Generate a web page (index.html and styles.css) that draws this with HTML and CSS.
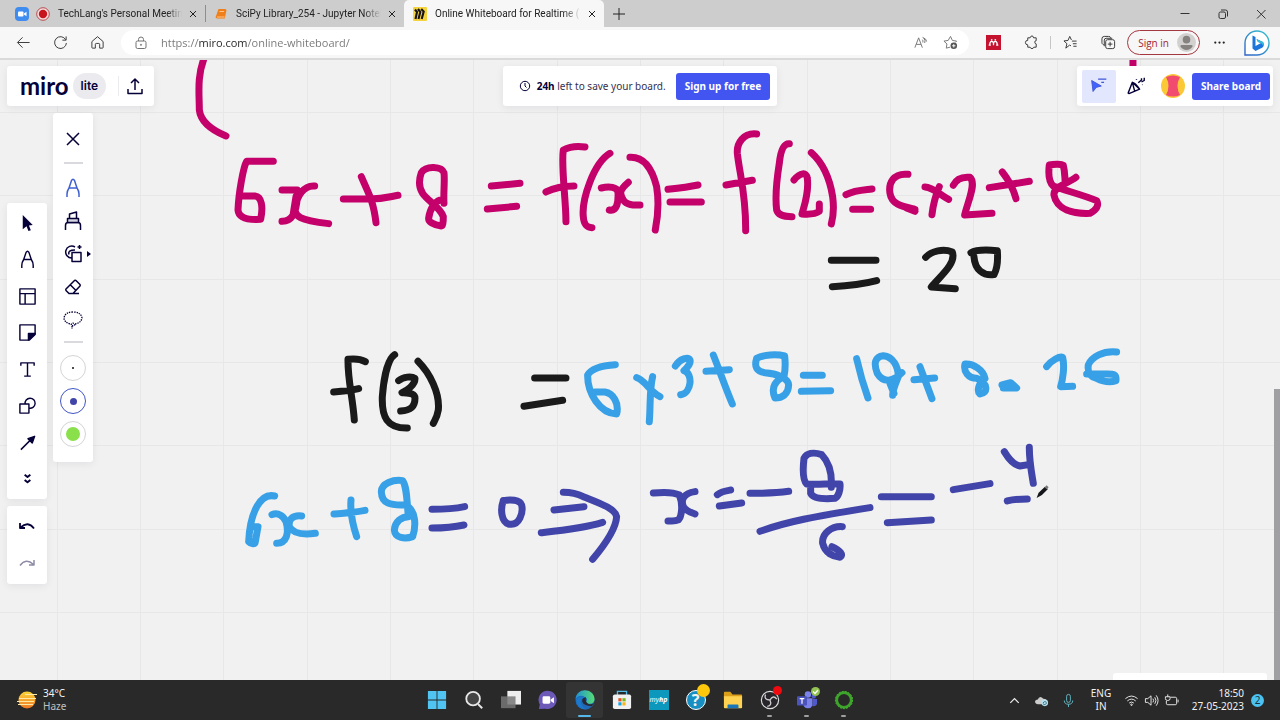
FILE: index.html
```html
<!DOCTYPE html>
<html lang="en">
<head>
<meta charset="utf-8">
<title>Online Whiteboard for Realtime Collaboration</title>
<link rel="stylesheet" href="styles.css">
</head>
<body>
<header class="tabstrip">
  <div class="tab">
    <svg class="i14" viewBox="0 0 14 14"><rect width="14" height="14" rx="4" fill="#3f8cf0"/><rect x="3" y="4.500" width="5.500" height="5" rx="1" fill="#fff"/><path d="M9 6.500L11.500 4.700V9.300L9 7.500Z" fill="#fff"/></svg>
    <svg class="i14 rec" viewBox="0 0 14 14"><circle cx="7" cy="7" r="6.300" fill="#f3dcdc" stroke="#b22630" stroke-width=".8"/><circle cx="7" cy="7" r="4.200" fill="#c8141e"/></svg>
    <span class="tab-title">TechLang's Personal Meetin</span>
    <button class="tab-close" aria-label="Close tab"><svg viewBox="0 0 8 8"><path d="M1 1L7 7M7 1L1 7"/></svg></button>
  </div>
  <div class="tab tab-second">
    <svg class="i14" viewBox="0 0 14 14"><path d="M4.500 2H11.500L12.500 3L10.800 11.500H3L1.500 10.500Z" fill="#ef7f1a"/><path d="M5.500 4.500H10M3 10H10.500" stroke="#ffc58b" fill="none"/></svg>
    <span class="tab-title">SciPy Library_254 - Jupyter Notel</span>
    <button class="tab-close" aria-label="Close tab"><svg viewBox="0 0 8 8"><path d="M1 1L7 7M7 1L1 7"/></svg></button>
  </div>
  <div class="tab tab-active">
    <svg class="i14" viewBox="0 0 14 14"><rect width="14" height="14" rx="1" fill="#f5d33d"/><path d="M2 2.500L4 5L2.500 12M5 2L7.300 5L5.500 12M8.200 2L10.700 4.500L8.700 12" fill="none" stroke="#15131a" stroke-width="2.100"/></svg>
    <span class="tab-title">Online Whiteboard for Realtime (</span>
    <button class="tab-close" aria-label="Close tab"><svg viewBox="0 0 8 8"><path d="M1 1L7 7M7 1L1 7"/></svg></button>
  </div>
  <button class="new-tab" aria-label="New tab"><svg viewBox="0 0 12 12"><path d="M6 0V12M0 6H12"/></svg></button>
  <div class="win-controls">
    <button aria-label="Minimize"><svg viewBox="0 0 10 10"><path d="M.5 4.500H9.500"/></svg></button>
    <button aria-label="Restore"><svg viewBox="0 0 10 10"><rect x="1" y="3" width="6.500" height="6.500" rx="1.500"/><path d="M3 1H7.500Q9.500 1 9.500 3V7.500"/></svg></button>
    <button aria-label="Close"><svg viewBox="0 0 10 10"><path d="M1 1L9.500 9.500M9.500 1L1 9.500"/></svg></button>
  </div>
</header>

<nav class="toolbar">
  <div class="nav-buttons">
    <button aria-label="Back"><svg viewBox="0 0 16 16"><path d="M14.500 8H2M7 2.500L1.500 8L7 13.500"/></svg></button>
    <button aria-label="Reload"><svg viewBox="0 0 16 16"><path d="M13.500 5A6.300 6.300 0 1 0 14.300 8.500M14 1.500V5.500H10"/></svg></button>
    <button aria-label="Home"><svg viewBox="0 0 16 16"><path d="M2 7L8 1.800L14 7V13.300Q14 14 13.300 14H10.300V10Q10.300 9 9.300 9H6.700Q5.700 9 5.700 10V14H2.700Q2 14 2 13.300Z"/></svg></button>
  </div>
  <div class="address">
    <svg class="i14 faint" viewBox="0 0 14 14"><rect x="2" y="5" width="10" height="7.500" rx="1.500"/><path d="M4.500 5V3.500A2.500 2.500 0 0 1 9.500 3.500V5"/><circle cx="7" cy="8.800" r=".6"/></svg>
    <input class="url" type="text" aria-label="Address" value="https://miro.com/online-whiteboard/">
    <button class="faint" aria-label="Read aloud"><svg viewBox="0 0 16 16"><path d="M2 13.500L6 3L10 13.500M3.500 10H8.500M10 5Q11 6 10.500 8M11.500 3.500Q13.500 5.500 12.500 8.500M10.200 2.500Q14.500 4 14.500 7"/></svg></button>
    <button class="faint" aria-label="Add to favourites"><svg viewBox="0 0 16 16"><path d="M7.500 13L3.500 14L4.200 9.500L1 6.500L5.500 5.800L8 1.500L10 5.800L14.500 6.500L13 8"/><circle cx="11.500" cy="11.500" r="3.500" fill="#555" stroke="none"/><path d="M11.500 9.700V13.300M9.700 11.500H13.300" stroke="#fff"/></svg></button>
  </div>
  <div class="extensions">
    <button aria-label="Mendeley"><svg viewBox="0 0 14 14"><rect width="14" height="14" fill="#c4122f" stroke="none"/><path d="M2.500 9.500H4.500M9.500 9.500H11.500M7 8V9.500M3.500 9Q3.500 6 5.300 6T7 8.500Q7 6 8.700 6T10.500 9" stroke="#fff" stroke-width="1.200"/><circle cx="5.300" cy="4.500" r=".8" fill="#fff" stroke="none"/><circle cx="8.700" cy="4.500" r=".8" fill="#fff" stroke="none"/></svg></button>
    <button aria-label="Extensions"><svg viewBox="0 0 16 16"><path d="M4 3H6.500Q7 1 8.500 1Q10 1 10.200 3H13V6Q11.500 6 11.500 7.700Q11.500 9.300 13 9.500V13H10.500Q10 14.500 8.500 14.500Q7 14.500 6.500 13H4V10.500Q1.500 10.500 1.500 8Q1.500 5.700 4 5.700Z"/></svg></button>
    <span class="divider"></span>
    <button aria-label="Favourites"><svg viewBox="0 0 16 16"><path d="M8.500 11.500L7 10.800L3 14L4.200 9.300L1 6.300L5.300 5.800L7.200 1.500L9 5.300M9.500 6.500H14.500M10.500 9.300H14.500M11 12H14.500"/></svg></button>
    <button aria-label="Collections"><svg viewBox="0 0 16 16"><rect x="5" y="5" width="9.500" height="9.500" rx="2"/><path d="M3 10.500L2 10Q1 9.500 1 8V4Q1 1.500 3.500 1.500H8Q10 1.500 10.500 3M9.700 7.300V12.200M7.300 9.700H12.200M3.500 12V5.500Q3.500 3.500 5.500 3.500H12"/></svg></button>
    <button class="sign-in">Sign in <svg viewBox="0 0 20 20"><circle cx="10" cy="10" r="10" fill="#d3d1d0"/><circle cx="10" cy="7" r="4" fill="#85827f"/><path d="M3.500 14Q3.500 12.500 5 12.500H15Q16.500 12.500 16.500 14Q14 18 10 18Q6 18 3.500 14Z" fill="#85827f"/></svg></button>
    <button aria-label="Settings and more"><svg viewBox="0 0 16 16"><g fill="#222" stroke="none"><circle cx="3.500" cy="8" r="1.200"/><circle cx="8" cy="8" r="1.200"/><circle cx="12.500" cy="8" r="1.200"/></g></svg></button>
    <button class="bing" aria-label="Bing"><svg viewBox="0 0 26 26"><defs><linearGradient id="ring" x1="0" y1="1" x2="1" y2="0"><stop stop-color="#2f62c8"/><stop offset="1" stop-color="#38c5d0"/></linearGradient></defs><path d="M1 25V13A12 12 0 1 1 13 25Z" fill="#fff" stroke="url(#ring)" stroke-width="1.400"/><path d="M8.500 5.500L11.500 7V16L17 13L14 12L12.500 9L19 12Q21 15 18.500 17.500L11.500 21L8.500 18.500Z" fill="#1b75dc" stroke="none"/><path d="M12.500 9L19 12Q20.500 13.500 19.500 16L17 13L14 12Z" fill="#35bdda" stroke="none"/></svg></button>
  </div>
</nav>

<main class="board">
  <svg class="canvas" viewBox="0 60 1280 620" preserveAspectRatio="xMidYMin slice" role="img" aria-label="Handwritten equations">
    <path class="grid" d="M57 60V680M140 60V680M223 60V680M307 60V680M390 60V680M473 60V680M557 60V680M640 60V680M723 60V680M807 60V680M890 60V680M973 60V680M1057 60V680M1140 60V680M1223 60V680M0 112H1280M0 195H1280M0 279H1280M0 362H1280M0 445H1280M0 529H1280M0 612H1280"/>
    <g transform="translate(180 50) scale(.3333)">
      <path class="ink magenta" d="M74 20C50 80 58 130 58 180C62 215 90 238 138 258M280 334H200C190 350 176 430 174 480C176 505 210 510 242 508C250 470 245 440 225 438H185M306 420H352V440C350 480 340 515 306 514M404 408C370 405 352 440 346 470C340 500 360 510 446 521M348 440L340 490M490 447H570C610 447 630 440 654 436M544 380C565 430 580 450 588 518M792 460C790 430 795 390 792 368C785 350 740 345 724 368C718 385 715 410 728 430C745 455 780 470 790 500C790 520 788 528 784 528C760 525 745 515 746 505C750 475 765 455 780 450M934 408L1020 400M922 477L1010 469M1215 291C1190 287 1165 292 1150 300C1143 350 1158 450 1158 515M1098 426C1120 415 1150 408 1182 408M1290 310C1240 340 1205 450 1210 500C1212 525 1220 532 1236 533M1264 414C1290 408 1310 412 1314 425C1316 460 1310 485 1288 480M1345 397C1318 420 1318 430 1330 450C1340 466 1360 466 1380 465M1350 322C1390 320 1415 350 1430 410C1438 460 1432 510 1426 540"/>
    </g>
    <g transform="translate(660 50) scale(.3333)">
      <path class="ink magenta" d="M24 418C60 414 90 410 114 405M30 456H124M290 252C250 248 230 280 232 310C240 380 258 430 257 542M198 405L277 391M388 281C372 280 362 300 358 340C350 390 345 440 350 480C354 495 375 500 396 500M402 390C420 368 440 365 442 385C448 430 430 475 426 492C450 494 470 490 478 484V462M454 308C490 340 510 390 518 440C522 470 520 500 514 522M558 434C585 420 610 420 636 417M578 478H632M744 373C700 368 685 400 690 430C695 465 730 470 765 478M740 474L765 484M795 411C820 412 840 435 866 448M838 410C825 440 820 460 816 494M880 406C890 385 910 380 930 382C950 400 925 450 914 495L996 490M988 413L1108 394M1027 366C1050 395 1060 415 1068 446M1248 382C1225 400 1180 410 1182 435C1190 480 1240 492 1290 490C1310 480 1318 465 1310 452C1270 435 1210 420 1180 408C1165 395 1165 370 1168 345C1185 341 1205 342 1210 346C1215 365 1214 380 1216 398M1419 20V60"/>
      <path class="ink black" d="M514 631H648M517 710C560 708 600 705 650 692M797 622C815 603 850 595 877 606C890 640 840 680 814 711L886 716M933 608C950 598 990 600 1012 602C1015 640 1010 660 1002 674C970 678 945 660 942 620"/>
    </g>
    <g transform="translate(230 330) scale(.3333)">
      <path class="ink black" d="M406 95C390 86 370 86 354 88C353 150 368 200 373 270M311 186C340 184 370 180 386 176M494 74C470 90 460 160 457 200C455 260 470 295 532 294M506 152C520 140 545 138 555 145C556 165 530 182 516 188C540 190 555 190 555 205C555 235 535 242 512 243M564 94C600 130 630 190 625 240C622 260 615 270 610 280M914 144H1008M882 229L998 211"/>
      <path class="ink blue" d="M1156 104C1120 106 1085 115 1073 135C1072 190 1110 250 1160 252C1168 220 1150 190 1125 186H1095M1220 143C1245 150 1260 185 1290 200M1268 140C1258 180 1262 230 1258 275M134 498C90 488 60 550 56 635C65 645 75 642 76 635L84 590H62M126 554C145 545 162 560 168 575C178 610 170 640 140 640M215 558C185 555 175 570 178 590C190 612 220 615 256 610M312 552C340 550 370 548 405 541M363 510C360 550 370 590 380 620M535 560C530 500 530 470 518 452C490 448 455 460 454 485C455 520 480 527 525 525C560 540 558 590 548 620C525 628 495 625 493 600C495 575 515 560 535 560"/>
      <path class="ink indigo" d="M606 538C640 538 670 537 704 530M606 594C640 594 670 592 702 585M820 512C810 540 815 575 835 582C870 590 880 545 875 525C870 508 840 508 820 512M972 540L1062 530M934 608C990 602 1060 595 1118 577M1000 487C1020 487 1040 490 1060 500C1110 520 1155 535 1160 560C1158 600 1120 650 1088 688"/>
    </g>
    <g transform="translate(640 330) scale(.3333)">
      <path class="ink blue" d="M106 108C120 85 145 80 150 90C153 100 140 115 132 122C160 130 155 190 122 194M198 124L268 119M220 75C240 125 255 170 277 222M432 140C436 120 436 95 434 78C410 72 370 74 350 85C342 110 350 125 375 128C410 130 445 145 446 165C445 195 425 204 405 204C390 170 410 150 432 140M490 136H547M484 184L572 182M650 86C660 130 672 170 684 204M786 128C760 155 730 160 712 130C700 100 705 80 730 77C760 80 775 110 775 140C765 165 758 180 758 196M750 160L762 190M822 149L884 144M840 110L876 206M1035 145C1030 120 1000 100 975 102C970 125 985 145 1010 145C1045 160 1045 190 1020 192C1008 180 1020 155 1035 145M1086 165L1112 158L1130 174H1090M1220 110C1235 90 1260 78 1268 82C1275 110 1268 150 1262 170L1298 169M1430 66C1390 62 1355 80 1345 105C1342 130 1350 140 1370 145C1390 155 1410 158 1428 152C1430 130 1420 132 1395 132H1340"/>
      <path class="ink indigo" d="M40 489C70 486 100 486 118 495C130 525 125 560 115 570C105 575 95 573 84 573M165 485C130 490 122 510 130 530C140 545 155 548 165 552M232 494C245 484 260 482 272 480M238 528L305 519M330 490C370 490 410 489 446 484M574 472C576 440 570 400 545 374C520 365 500 370 492 385C488 420 488 450 500 462C540 464 570 460 600 462C602 480 595 500 585 505C550 508 520 505 512 490V470M360 604C440 575 520 560 690 533M607 590C575 588 545 610 548 640C555 670 580 680 600 682C612 675 600 660 576 650M724 500H874M742 578L874 570M940 479L1050 461M1093 365C1105 385 1120 405 1140 408L1165 404M1168 352C1168 395 1175 430 1180 460M1102 513C1120 508 1140 507 1162 507"/>
      <path d="M1190 504L1196 488L1215 470L1224 477L1206 495Z" fill="#15161a"/><path d="M1214 472L1220 466L1226 472L1220 478Z" fill="#777"/>
    </g>
  </svg>

  <div class="board-top">
    <div class="panel brand">
      <a class="logo" href="#">miro</a><span class="lite">lite</span><span class="divider"></span>
      <button class="tool" aria-label="Export"><svg viewBox="0 0 20 20"><path d="M10 14V3M6 7L10 3L14 7M3 13V17.500H17V13"/></svg></button>
    </div>
    <div class="panel notice">
      <svg class="clock" viewBox="0 0 12 12"><circle cx="6" cy="6" r="4.700"/><path d="M6 3V6L7.500 7.500"/></svg>
      <span><b>24h</b> left to save your board.</span>
      <button class="primary">Sign up for free</button>
    </div>
    <div class="panel share">
      <button class="tool selected" aria-label="Hide collaborators' cursors"><svg viewBox="0 0 24 24"><path d="M4 6L14.500 12L9 13.500L5.500 18Z" fill="#4262ff" stroke="#4056d6" stroke-width="1"/><path d="M11 4.500H20M14.500 8H17.500"/></svg></button>
      <button class="tool" aria-label="Reactions"><svg viewBox="0 0 24 24"><path d="M8 8L3.500 19.500Q3.500 20.500 5 20L16 15.500ZM8 8L10.500 17.500M8 8Q11 8 16 15.500M12.500 5.500V4.500M14.500 8.500L18 5.500V3.500M18.500 10.500L19 10.500M21 3V6L18 7.500"/></svg></button>
      <svg class="avatar" viewBox="0 0 24 24"><circle cx="12" cy="12" r="12" fill="#fbc936"/><path d="M5 3Q12 0 19 3Q14 12 19 21Q12 24 5 21Q10 12 5 3Z" fill="#f24b70"/></svg>
      <button class="primary">Share board</button>
    </div>
  </div>

  <div class="rails">
    <div class="left-rail">
      <div class="panel rail tools">
        <button class="tool" aria-label="Select"><svg viewBox="0 0 20 20"><path d="M5 1L15.500 11.500L11.500 12L13.500 17L11 18L9 13L5 16Z" fill="#050038" stroke="none"/></svg></button>
        <button class="tool" aria-label="Pen"><svg viewBox="0 0 20 20"><path d="M4 19V16Q4 13 6 10L8.500 2.500Q10 0 11.500 2.500L14 10Q16 13 16 16V19M6 10H14"/></svg></button>
        <button class="tool" aria-label="Templates"><svg viewBox="0 0 20 20"><path d="M2 2H18V18H2ZM2 7H18M7.500 7V18"/></svg></button>
        <button class="tool" aria-label="Sticky note"><svg viewBox="0 0 20 20"><path d="M2 2H18V12L12 18H2Z"/><path d="M11 18V11H18Z" fill="#050038"/></svg></button>
        <button class="tool" aria-label="Text"><svg viewBox="0 0 20 20"><path d="M3 6V3H17V6M10 3V17M6.500 17H13.500"/></svg></button>
        <button class="tool" aria-label="Shapes"><svg viewBox="0 0 20 20"><path d="M2 8.500H11.500V18H2ZM7.500 8.500A5.300 5.300 0 1 1 11.500 12.800"/></svg></button>
        <button class="tool" aria-label="Connection line"><svg viewBox="0 0 20 20"><path d="M3 17.500L13 7.500"/><path d="M10.500 6L17.500 3.500L15 10.500Z" fill="#050038"/></svg></button>
        <button class="tool" aria-label="More tools"><svg viewBox="0 0 20 20"><path d="M7 6L10 8.500L13 6M7 11.500L10 14L13 11.500" stroke-width="2"/></svg></button>
      </div>
      <div class="panel rail history">
        <button class="tool" aria-label="Undo"><svg viewBox="0 0 20 20"><path d="M3 6V11H8M3.500 10.500Q11 3.500 17 11.500" stroke-width="1.800"/></svg></button>
        <button class="tool redo" aria-label="Redo"><svg viewBox="0 0 20 20"><path d="M17 6V11H12M16.500 10.500Q9 3.500 3 11.500"/></svg></button>
      </div>
    </div>
    <div class="panel rail draw">
      <button class="tool" aria-label="Close"><svg viewBox="0 0 20 20"><path d="M4 4L16 16M16 4L4 16"/></svg></button>
      <span class="rule"></span>
      <button class="tool active" aria-label="Pen"><svg viewBox="0 0 20 20"><path d="M4 19V16Q4 13 6 10L8.500 2.500Q10 0 11.500 2.500L14 10Q16 13 16 16V19M6 10H14"/></svg></button>
      <button class="tool" aria-label="Highlighter"><svg viewBox="0 0 20 20"><path d="M2.500 19V14.500Q2.500 11.500 5 11.500H15Q17.500 11.500 17.500 14.500V19"/><path d="M4.500 11.500V7.500H15.500V11.500Z" fill="#d5d4e0"/><path d="M6.500 7.500V3L13.500 1V7.500"/></svg></button>
      <button class="tool has-more" aria-label="Smart drawing"><svg viewBox="0 0 20 20"><path d="M9 8.500H18V17.500H9ZM9 14A6 6 0 1 1 12 3M6 10.500Q4.500 6 12 6M16.500 1V5M14.500 3H18.500"/></svg></button>
      <button class="tool" aria-label="Eraser"><svg viewBox="0 0 20 20"><path d="M3 12L11.500 3.500Q12.500 3 13.500 4L17 7.500Q17.500 8.500 17 9L10 16.500H6L3 13.500Q2.500 12.500 3 12ZM7.500 8L13 13.500M8 16.500H16"/></svg></button>
      <button class="tool" aria-label="Lasso"><svg viewBox="0 0 20 20"><path d="M7 14Q1 12 1 8Q2 2 10 2Q18 2 19 8Q18 13 12 14Q9 12 8 15Q10 17 13 13.500M9 16V19" stroke-width="1.300" stroke-dasharray="1.400 1"/></svg></button>
      <span class="rule"></span>
      <div class="presets">
        <button class="preset" aria-label="Thin black pen"><span class="dot tiny"></span></button>
        <button class="preset current" aria-label="Indigo pen"><span class="dot medium"></span></button>
        <button class="preset" aria-label="Green pen"><span class="dot large"></span></button>
      </div>
    </div>
  </div>
  <div class="zoom-panel"></div>
  <div class="scroll-thumb"></div>
</main>

<footer class="taskbar">
  <div class="weather">
    <svg viewBox="0 0 20 20"><defs><linearGradient id="sun" x1="0" y1="0" x2="0" y2="1"><stop stop-color="#fbd537"/><stop offset="1" stop-color="#f07825"/></linearGradient></defs><circle cx="10" cy="10" r="8.500" fill="url(#sun)"/><path d="M8 4.500H20M2 8.500H19M0 11.500H17M1 14.500H16" stroke="#ffe9a5"/></svg>
    <div><div>34°C</div><div class="muted">Haze</div></div>
  </div>
  <div class="apps">
    <button aria-label="Start"><svg viewBox="0 0 22 22"><path d="M1 1H10.500V10.500H1ZM11.500 1H21V10.500H11.500ZM1 11.500H10.500V21H1ZM11.500 11.500H21V21H11.500Z" fill="#50c4f2"/></svg></button>
    <button aria-label="Search"><svg viewBox="0 0 22 22"><circle cx="10" cy="9.500" r="7.500" fill="#444" stroke="#e8e8e8" stroke-width="2"/><path d="M15.500 15.500L20 20" stroke="#e8e8e8" stroke-width="2.200"/></svg></button>
    <button aria-label="Task view"><svg viewBox="0 0 22 22"><path d="M7 1H22V16H7Z" fill="#eee"/><path d="M0 7H16V20H0Z" fill="#777" opacity=".85"/></svg></button>
    <button aria-label="Chat"><svg viewBox="0 0 22 22"><path d="M1 21L2 16A10 10 0 1 1 8 20.500Z" fill="#6c59b8"/><rect x="5" y="7" width="8.500" height="8" rx="1.500" fill="#fff"/><path d="M14 10.500L17.500 8V14.500L14 12Z" fill="#fff"/></svg></button>
    <button class="focused" aria-label="Edge"><svg viewBox="0 0 22 22"><defs><linearGradient id="edge"><stop stop-color="#218fd5"/><stop offset="1" stop-color="#55df72"/></linearGradient></defs><circle cx="11" cy="11" r="10.500" fill="#2169b8"/><path d="M.5 10C2-4 21-2 21.500 10Q21 16 15 15L12 13Q15 10 11 8Q5 4 .5 10" fill="url(#edge)"/><path d="M12 8Q7 8 8 13Q9 17 18.500 18L21 14Q18 17 14 15Q11 13 12 8" fill="#292a31"/><path d="M1 10Q7 5 11 8Q5 10 7 15Q9 21 14 21Q2 23 1 10" fill="#1b78ca"/></svg></button>
    <button aria-label="Store"><svg viewBox="0 0 22 22"><path d="M6 6V1.500H16V6" fill="none" stroke="#55bce6" stroke-width="1.500"/><rect x="1" y="5" width="20" height="16" rx="2" fill="#f1f1f1"/><path d="M7 9H10.500V12.500H7Z" fill="#e35125"/><path d="M11.500 9H15V12.500H11.500Z" fill="#7bba16"/><path d="M7 13.500H10.500V17H7Z" fill="#19a3e7"/><path d="M11.500 13.500H15V17H11.500Z" fill="#f7b918"/></svg></button>
    <button class="hp" aria-label="myHP"><span>my<b>hp</b></span></button>
    <button class="help" aria-label="Support assistant"><span class="q">?</span><i class="badge amber"></i></button>
    <button aria-label="File Explorer"><svg viewBox="0 0 22 22"><path d="M1 3Q1 2 2 2H8L10.500 5H20Q21 5 21 6V8H1Z" fill="#dc9e19"/><path d="M1 7H21V19Q21 20 20 20H2Q1 20 1 19Z" fill="#ffd251"/><path d="M5 20V17Q5 16 6 16H16Q17 16 17 17V20" fill="#1976b8"/></svg></button>
    <button class="running" aria-label="OBS"><svg viewBox="0 0 22 22"><circle cx="11" cy="11" r="9.500" fill="#272529" stroke="#ddd" stroke-width="1.300"/><path d="M11 11Q4 11 6 5M11 11Q14.500 5 18.500 10M11 11Q13.500 17.500 8 18" fill="none" stroke="#ccc" stroke-width="1.500"/></svg><i class="badge red"></i></button>
    <button class="running" aria-label="Teams"><svg viewBox="0 0 22 22"><circle cx="12" cy="5" r="3.500" fill="#7b83eb"/><circle cx="18.500" cy="7" r="2.500" fill="#5059c9"/><path d="M7 9H17V17Q15 21 11 20Q7 19 7 15Z" fill="#7b83eb"/><path d="M17 10H22V15Q21 18 17 18Z" fill="#5059c9"/><rect y="7" width="11" height="10" rx="1" fill="#4b53bc"/><path d="M3 9.500H8M5.500 9.500V15" stroke="#fff" stroke-width="1.300"/></svg><i class="badge green"><svg viewBox="0 0 9 9"><path d="M2 4.500L4 6.500L7 3" fill="none" stroke="#fff" stroke-width="1.300"/></svg></i></button>
    <button class="running" aria-label="Anaconda"><svg viewBox="0 0 22 22"><circle cx="11" cy="11" r="8" fill="none" stroke="#3da52a" stroke-width="3"/><circle cx="11" cy="11" r="9.500" fill="none" stroke="#4bc035" stroke-width="1" stroke-dasharray="2 1.500"/></svg></button>
  </div>
  <div class="tray">
    <button aria-label="Show hidden icons"><svg viewBox="0 0 16 16"><path d="M3.500 10.500L8 6L12.500 10.500" stroke-width="1.300"/></svg></button>
    <button aria-label="OneDrive"><svg viewBox="0 0 16 16"><path d="M4 12Q0 11 1.500 8Q3 7 4 7Q6 2 10 6Q14 6 13.500 9L11 12Z" fill="#ccc" stroke="none"/><circle cx="11.500" cy="10.500" r="3.500" fill="#b8e1ee" stroke="none"/><path d="M9.500 10.500Q11.500 8 13.500 10M13.500 11Q11.500 13.500 9.500 11.500" stroke="#316477"/></svg></button>
    <button aria-label="Microphone"><svg class="mic" viewBox="0 0 16 16"><rect x="6" y="1.500" width="4" height="8.500" rx="2"/><path d="M3.500 8Q3.500 12 8 12Q12.500 12 12.500 8M8 12V15"/></svg></button>
    <div class="lang"><div>ENG</div><div>IN</div></div>
    <button class="status" aria-label="Network, sound and battery">
      <svg viewBox="0 0 16 16"><path d="M1.500 6Q8 .5 14.500 6M3.500 8.500Q8 4.500 12.500 8.500M5.500 10.700Q8 8.500 10.500 10.700"/><circle cx="8" cy="12.500" r=".8"/></svg>
      <svg viewBox="0 0 16 16"><path d="M1.500 6H4L7.500 3V13L4 10H1.500ZM9.500 6Q11 8 9.500 10M11.500 4.500Q14 8 11.500 11.500M13 2.500Q17 8 13 13.500"/></svg>
      <svg viewBox="0 0 16 16"><path d="M7 4.500H12Q13.500 4.500 13.500 6V11Q13.500 12.500 12 12.500H4Q2.500 12.500 2.500 11V8.500M15 7V10M4 1.500V4M1.500 4H6.500V6Q6.500 8 4 8Q1.500 8 1.500 6Z"/></svg>
    </button>
    <div class="time"><div>18:50</div><div>27-05-2023</div></div>
    <span class="count">2</span>
  </div>
</footer>
</body>
</html>
```

FILE: styles.css
```css
* { box-sizing: border-box; }
body {
  margin: 0;
  height: 100vh;
  display: flex;
  flex-direction: column;
  overflow: hidden;
  font: 10px/14px "Noto Sans", sans-serif;
  color: #222;
}
button {
  border: 0;
  padding: 0;
  background: none;
  font: inherit;
  color: inherit;
  display: flex;
  align-items: center;
  justify-content: center;
  flex: none;
}
svg { display: block; flex: none; }
.i14 { width: 14px; height: 14px; }

/* Tab strip */
.tabstrip {
  height: 27px;
  display: flex;
  align-items: center;
  background: #cdcdcd;
  padding-left: 9px;
}
.tab {
  width: 197px;
  height: 17px;
  padding: 0 7px 0 6px;
  display: flex;
  align-items: center;
  border-right: 1px solid #8d8d8d;
}
.tab-second { border: 0; width: 198px; padding-left: 8px; }
.tab-active {
  width: 200px;
  height: 27px;
  padding-left: 9px;
  background: #f7f7f7;
  border: 0;
  border-radius: 5px 5px 0 0;
}
.rec { margin-left: 7px; }
.tab-title {
  flex: 1;
  min-width: 0;
  margin-left: 8px;
  white-space: nowrap;
  font-family: Roboto, sans-serif;
  mask-image: linear-gradient(90deg, #000 88%, transparent);
}
.tab-close { width: 10px; height: 14px; margin-left: 6px; }
.tab-close svg { width: 8px; height: 8px; }
.tab-close path, .new-tab path { stroke: #222; stroke-width: 1; fill: none; }
.new-tab { width: 29px; height: 27px; }
.new-tab svg { width: 12px; height: 12px; }
.win-controls { margin-left: auto; display: flex; }
.win-controls button { width: 38px; height: 27px; }
.win-controls svg { width: 10px; height: 10px; fill: none; stroke: #333; }

/* Address row */
.toolbar {
  height: 33px;
  display: flex;
  align-items: center;
  background: #f7f7f7;
  border-bottom: 2px solid #dadada;
}
.toolbar svg { fill: none; stroke: #333; stroke-width: 1; }
.nav-buttons { display: flex; padding: 0 5px; }
.nav-buttons button { width: 37px; height: 26px; }
.nav-buttons svg, .address button svg, .extensions svg { width: 15px; height: 15px; }
.address {
  flex: 1;
  height: 25px;
  display: flex;
  align-items: center;
  padding: 0 4px 0 13px;
  border-radius: 13px;
  background: #fff;
}
.toolbar .faint svg, .toolbar svg.faint { stroke: #737373; }
.address button { width: 30px; height: 24px; }
.url {
  flex: 1;
  min-width: 0;
  border: 0;
  outline: 0;
  padding: 0;
  margin-left: 13px;
  font: 11px/16px "Open Sans", "Noto Sans", sans-serif;
  background: linear-gradient(90deg, #767676 37px, #222 37px 86px, #767676 86px);
  background-clip: text;
  -webkit-background-clip: text;
  -webkit-text-fill-color: transparent;
}
.extensions { display: flex; align-items: center; padding: 0 4px 0 5px; }
.extensions button { width: 38px; height: 26px; }
.extensions .divider { width: 1px; height: 13px; background: #c6c6c6; }
.extensions .sign-in {
  width: 73px;
  height: 25px;
  gap: 8px;
  justify-content: flex-end;
  padding-right: 3px;
  border: 1px solid #a4373f;
  border-radius: 13px;
  color: #a4262c;
  font-family: "Open Sans", sans-serif;
}
.extensions .sign-in svg { width: 19px; height: 19px; stroke: none; }
.extensions .bing svg { width: 26px; height: 26px; }

/* Whiteboard */
.board {
  flex: 1;
  min-height: 0;
  position: relative;
  overflow: hidden;
  background: #f1f1f1;
  color: #050038;
}
.canvas { position: absolute; inset: 0; width: 100%; height: 100%; }
.grid { fill: none; stroke: #e7e7e8; stroke-width: 1; shape-rendering: crispEdges; }
.ink { fill: none; stroke-width: 21; stroke-linecap: round; stroke-linejoin: round; }
.magenta { stroke: #c4006a; }
.black { stroke: #1a1a1a; }
.blue { stroke: #37a0e6; }
.indigo { stroke: #4144a8; }

.panel {
  background: #fff;
  border-radius: 3px;
  box-shadow: 0 2px 8px rgba(5, 0, 56, .07);
}
.board-top {
  position: relative;
  display: grid;
  grid-template-columns: 1fr auto 1fr;
  padding: 6px 7px 0;
}
.board-top .panel { height: 40px; display: flex; align-items: center; }
.tool svg {
  width: 20px;
  height: 20px;
  fill: none;
  stroke: #050038;
  stroke-width: 1.500;
  stroke-linejoin: round;
}
.brand { justify-self: start; padding: 0 9px 0 13px; }
.logo { font: bold 24px/30px Lato, sans-serif; color: #050038; text-decoration: none; }
.lite {
  margin-left: 4px;
  padding: 6px 8px;
  border-radius: 13px;
  background: #ebebef;
  font: 600 12px/14px Inter, sans-serif;
}
.brand .divider { width: 1px; height: 20px; margin: 0 6px 0 12px; background: #ebebef; }
.clock { width: 12px; height: 12px; fill: none; stroke: #050038; }
.notice { padding: 0 7px 0 16px; color: #33304f; }
.notice span { margin: 0 10px 0 6px; }
.notice b { color: #050038; }
.primary {
  height: 27px;
  padding: 0 9px;
  border-radius: 3px;
  background: #4255f0;
  color: #fff;
  font-weight: 700;
}
.share { justify-self: end; padding: 0 3px 0 5px; }
.share .tool { width: 34px; height: 33px; border-radius: 2px; }
.share .tool svg { width: 22px; height: 22px; }
.share .tool + .tool { margin-left: 3px; }
.selected { background: #e3e7fd; }
.share .selected svg { stroke: #4056d6; }
.avatar { width: 24px; height: 24px; margin: 0 7px 0 8px; }

.rails { position: relative; display: flex; align-items: flex-start; gap: 6px; padding: 7px; }
.left-rail { margin-top: 90px; display: flex; flex-direction: column; gap: 7px; }
.rail { width: 40px; display: flex; flex-direction: column; align-items: center; }
.tools { height: 296px; padding: 2px 0; }
.tools .tool { height: 36px; flex: 1 0 auto; }
.tools .tool svg { width: 19px; height: 19px; }
.history { padding: 2px 0; }
.history .tool { height: 37px; }
.redo svg { opacity: .45; }
.draw { padding: 8px 0; }
.draw .tool { width: 40px; height: 33px; }
.draw .tool:first-child { height: 36px; }
.rule { width: 19px; height: 2px; margin: 5px 0 7px; background: #d9d9de; }
.draw .active svg { stroke: #4060d2; }
.has-more { position: relative; }
.has-more::after {
  content: "";
  position: absolute;
  right: 2px;
  border-left: 4px solid #050038;
  border-top: 3px solid transparent;
  border-bottom: 3px solid transparent;
}
.presets { display: flex; flex-direction: column; gap: 7px; padding: 5px 0 7px; }
.preset { width: 26px; height: 26px; border: 1px solid #d4d4d6; border-radius: 50%; }
.preset.current { border-color: #4055c4; }
.dot { border-radius: 50%; }
.tiny { width: 2px; height: 2px; background: #111; }
.medium { width: 7px; height: 7px; background: #4144a8; }
.large { width: 14px; height: 14px; background: #8ae04a; }
.zoom-panel {
  position: absolute;
  right: 13px;
  bottom: 0;
  width: 154px;
  height: 7px;
  background: #fff;
  border-radius: 3px 3px 0 0;
}
.scroll-thumb { position: absolute; right: 0; bottom: 0; width: 6px; height: 47%; background: #a0a0a2; }

/* Taskbar */
.taskbar {
  height: 40px;
  display: grid;
  grid-template-columns: 1fr auto 1fr;
  align-items: center;
  background: #292929;
  color: #f2f2f2;
  line-height: 13px;
}
.weather { display: flex; align-items: center; gap: 6px; padding-left: 17px; }
.weather svg { width: 20px; height: 20px; }
.muted { color: #c0c0c0; }
.apps { display: flex; }
.apps button { width: 37px; height: 36px; position: relative; }
.apps button > svg { width: 20px; height: 20px; }
.apps .focused { background: #343434; border-radius: 3px; }
.focused::after, .running::after {
  content: "";
  position: absolute;
  bottom: 1px;
  width: 13px;
  height: 2px;
  border-radius: 1px;
  background: #54b8e8;
}
.running::after { width: 5px; background: #a0a0a0; }
.hp span {
  width: 20px;
  line-height: 20px;
  background: #0c98bd;
  color: #fff;
  font-size: 7px;
  font-style: italic;
}
.q {
  width: 20px;
  height: 20px;
  border: 1px solid #fff;
  border-radius: 50%;
  background: #178fc2;
  font: bold 16px/18px "Open Sans", sans-serif;
}
.badge { position: absolute; top: 2px; right: 5px; width: 9px; height: 9px; border-radius: 50%; }
.amber { width: 13px; height: 13px; right: 4px; background: #fdc80c; }
.red { top: 4px; right: 6px; background: #f00b10; }
.green { top: 5px; background: #92c353; }
.tray { justify-self: end; display: flex; align-items: center; padding-right: 16px; }
.tray button { width: 27px; height: 36px; }
.tray svg { width: 15px; height: 15px; fill: none; stroke: #eee; }
.tray .mic { stroke: #64bbc7; }
.lang { width: 38px; text-align: center; }
.tray .status { width: 62px; gap: 5px; }
.time { width: 62px; text-align: right; }
.count {
  width: 13px;
  height: 13px;
  margin-left: 7px;
  border-radius: 50%;
  background: #4cc2f1;
  color: #17313c;
  text-align: center;
}
```
